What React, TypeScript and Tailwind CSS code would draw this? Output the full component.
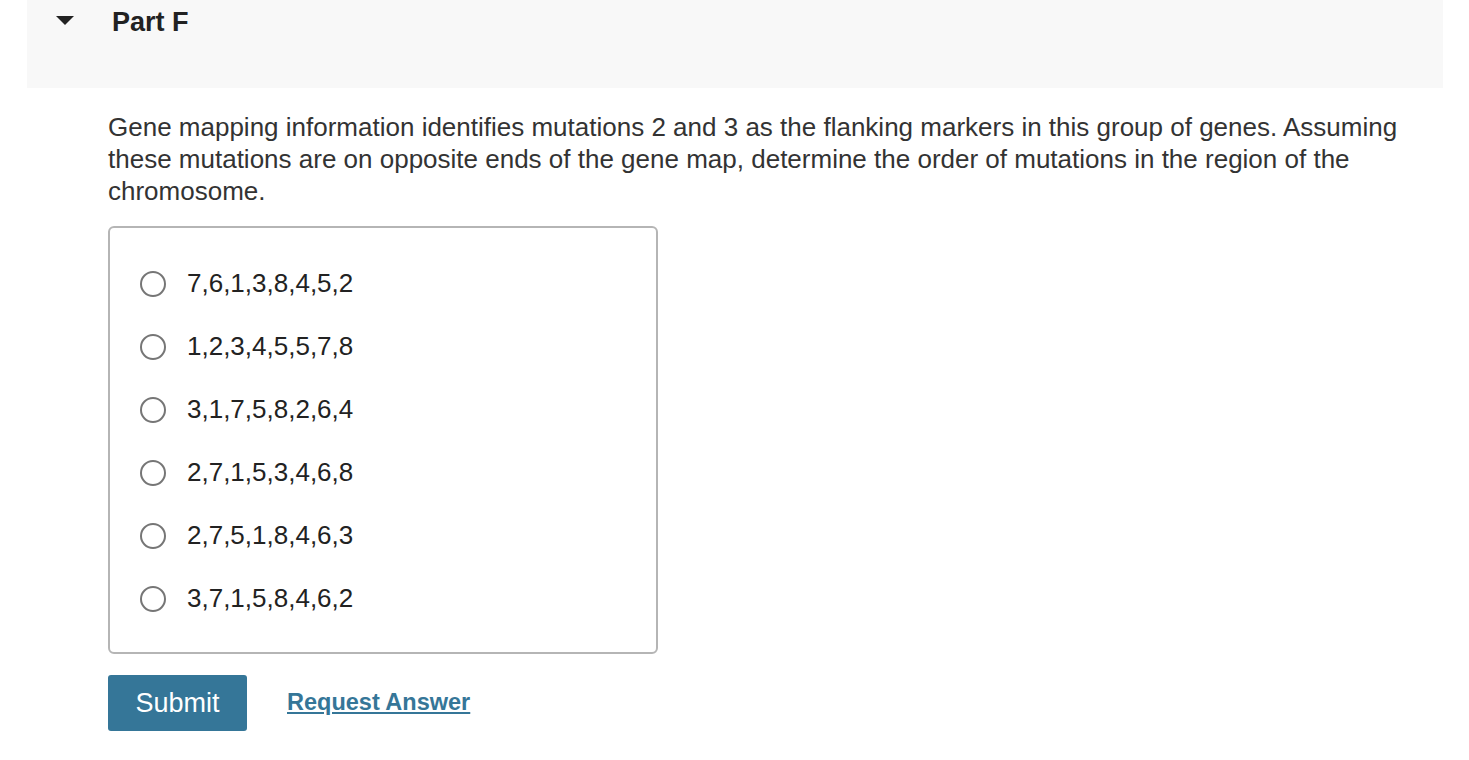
export default function App() {
    const options = [
        '7,6,1,3,8,4,5,2',
        '1,2,3,4,5,5,7,8',
        '3,1,7,5,8,2,6,4',
        '2,7,1,5,3,4,6,8',
        '2,7,5,1,8,4,6,3',
        '3,7,1,5,8,4,6,2',
    ];

    return (
        <div className="min-h-screen bg-white text-[#222] font-['Liberation_Sans',Arial,sans-serif]">
            <div className="ml-[27px] w-[1416px] h-[88px] bg-[#f8f8f8] flex items-start">
                <div className="w-[85px] pl-[28px] pt-[16px]">
                    <svg width="20" height="10" viewBox="0 0 20 10">
                        <path d="M1 0 L19 0 L10 9 Z" fill="#222" />
                    </svg>
                </div>
                <h2 className="text-[27px] font-bold leading-none pt-[9px]">Part F</h2>
            </div>

            <div className="pl-[108px] pr-[40px]">
                <p className="mt-[23px] text-[26px] leading-[32px] text-[#333]">
                    Gene mapping information identifies mutations 2 and 3 as the flanking markers in this group of genes. Assuming
                    <br />
                    these mutations are on opposite ends of the gene map, determine the order of mutations in the region of the
                    <br />
                    chromosome.
                </p>

                <div className="mt-[19px] w-[550px] h-[428px] border-2 border-[#b5b5b5] rounded-[6px] pt-[24px] pl-[30px]">
                    {options.map((opt) => (
                        <label key={opt} className="flex items-center h-[63px] cursor-pointer">
                            <span className="w-[26px] h-[26px] rounded-full border-2 border-[#767676] bg-white" />
                            <span className="ml-[21px] text-[26px] text-[#222]">{opt}</span>
                        </label>
                    ))}
                </div>

                <div className="mt-[21px] flex items-center">
                    <button className="w-[139px] h-[56px] bg-[#357698] text-white text-[27px] rounded-[3px]">
                        Submit
                    </button>
                    <a href="#" className="ml-[40px] text-[23.5px] font-bold text-[#357698] underline">
                        Request Answer
                    </a>
                </div>
            </div>
        </div>
    );
}
